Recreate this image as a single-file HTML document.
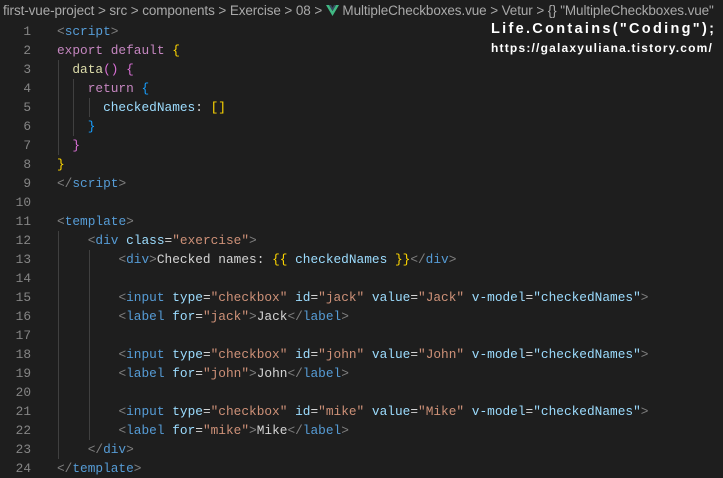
<!DOCTYPE html>
<html><head><meta charset="utf-8"><style>
body{margin:0;width:723px;height:478px;background:#1e1e1e;overflow:hidden;position:relative;font-family:"Liberation Mono",monospace;}
.bc{position:absolute;left:3px;top:1px;height:20px;line-height:20px;font-family:"Liberation Sans",sans-serif;font-size:13.5px;color:#a9a9a9;white-space:nowrap;letter-spacing:-0.1px}
.ln{position:absolute;left:0;width:31px;text-align:right;color:#858585;font-size:12.8px;height:19px;line-height:19px}
.cd{position:absolute;left:57px;font-size:12.8px;height:19px;line-height:19px;white-space:pre;color:#d4d4d4}
.g{position:absolute;width:1px;background:#404040}
.p{color:#808080}.t{color:#569cd6}.a{color:#9cdcfe}.s{color:#ce9178}.k{color:#c586c0}.f{color:#dcdcaa}.y{color:#ffd700}.m{color:#da70d6}.b{color:#179fff}.w{color:#d4d4d4}
.wm{position:absolute;left:491px;font-family:"Liberation Sans",sans-serif;font-weight:bold;color:#fff;white-space:nowrap}
</style></head><body>
<div class="bc">first-vue-project &gt; src &gt; components &gt; Exercise &gt; 08 &gt; <svg width="13" height="11" viewBox="0 0 13 11" style="vertical-align:-1px"><path d="M0 0H3L6.5 6L10 0H13L6.5 11Z" fill="#41b883"/><path d="M3 0H5L6.5 2.6L8 0H10L6.5 6Z" fill="#35495e"/></svg> MultipleCheckboxes.vue &gt; Vetur &gt; {} "MultipleCheckboxes.vue"</div>
<div class="wm" style="top:21px;font-size:14.5px;letter-spacing:2.3px">Life.Contains("Coding");</div>
<div class="wm" style="top:41px;font-size:12px;letter-spacing:1.2px">https://galaxyuliana.tistory.com/</div>

<div class="g" style="left:58px;top:60px;height:95px"></div>
<div class="g" style="left:73px;top:79px;height:57px"></div>
<div class="g" style="left:89px;top:98px;height:19px"></div>
<div class="g" style="left:58px;top:231px;height:228px"></div>
<div class="g" style="left:89px;top:250px;height:190px"></div>

<div class="ln" style="top:22px">1</div><div class="cd" style="top:22px"><span class="p">&lt;</span><span class="t">script</span><span class="p">&gt;</span></div>
<div class="ln" style="top:41px">2</div><div class="cd" style="top:41px"><span class="k">export default</span> <span class="y">{</span></div>
<div class="ln" style="top:60px">3</div><div class="cd" style="top:60px">  <span class="f">data</span><span class="m">()</span> <span class="m">{</span></div>
<div class="ln" style="top:79px">4</div><div class="cd" style="top:79px">    <span class="k">return</span> <span class="b">{</span></div>
<div class="ln" style="top:98px">5</div><div class="cd" style="top:98px">      <span class="a">checkedNames</span>: <span class="y">[]</span></div>
<div class="ln" style="top:117px">6</div><div class="cd" style="top:117px">    <span class="b">}</span></div>
<div class="ln" style="top:136px">7</div><div class="cd" style="top:136px">  <span class="m">}</span></div>
<div class="ln" style="top:155px">8</div><div class="cd" style="top:155px"><span class="y">}</span></div>
<div class="ln" style="top:174px">9</div><div class="cd" style="top:174px"><span class="p">&lt;/</span><span class="t">script</span><span class="p">&gt;</span></div>
<div class="ln" style="top:193px">10</div>
<div class="ln" style="top:212px">11</div><div class="cd" style="top:212px"><span class="p">&lt;</span><span class="t">template</span><span class="p">&gt;</span></div>
<div class="ln" style="top:231px">12</div><div class="cd" style="top:231px">    <span class="p">&lt;</span><span class="t">div</span> <span class="a">class</span>=<span class="s">"exercise"</span><span class="p">&gt;</span></div>
<div class="ln" style="top:250px">13</div><div class="cd" style="top:250px">        <span class="p">&lt;</span><span class="t">div</span><span class="p">&gt;</span>Checked names: <span class="y">{{</span> <span class="a">checkedNames</span> <span class="y">}}</span><span class="p">&lt;/</span><span class="t">div</span><span class="p">&gt;</span></div>
<div class="ln" style="top:269px">14</div>
<div class="ln" style="top:288px">15</div><div class="cd" style="top:288px">        <span class="p">&lt;</span><span class="t">input</span> <span class="a">type</span>=<span class="s">"checkbox"</span> <span class="a">id</span>=<span class="s">"jack"</span> <span class="a">value</span>=<span class="s">"Jack"</span> <span class="a">v-model</span>=<span class="a">"checkedNames"</span><span class="p">&gt;</span></div>
<div class="ln" style="top:307px">16</div><div class="cd" style="top:307px">        <span class="p">&lt;</span><span class="t">label</span> <span class="a">for</span>=<span class="s">"jack"</span><span class="p">&gt;</span>Jack<span class="p">&lt;/</span><span class="t">label</span><span class="p">&gt;</span></div>
<div class="ln" style="top:326px">17</div>
<div class="ln" style="top:345px">18</div><div class="cd" style="top:345px">        <span class="p">&lt;</span><span class="t">input</span> <span class="a">type</span>=<span class="s">"checkbox"</span> <span class="a">id</span>=<span class="s">"john"</span> <span class="a">value</span>=<span class="s">"John"</span> <span class="a">v-model</span>=<span class="a">"checkedNames"</span><span class="p">&gt;</span></div>
<div class="ln" style="top:364px">19</div><div class="cd" style="top:364px">        <span class="p">&lt;</span><span class="t">label</span> <span class="a">for</span>=<span class="s">"john"</span><span class="p">&gt;</span>John<span class="p">&lt;/</span><span class="t">label</span><span class="p">&gt;</span></div>
<div class="ln" style="top:383px">20</div>
<div class="ln" style="top:402px">21</div><div class="cd" style="top:402px">        <span class="p">&lt;</span><span class="t">input</span> <span class="a">type</span>=<span class="s">"checkbox"</span> <span class="a">id</span>=<span class="s">"mike"</span> <span class="a">value</span>=<span class="s">"Mike"</span> <span class="a">v-model</span>=<span class="a">"checkedNames"</span><span class="p">&gt;</span></div>
<div class="ln" style="top:421px">22</div><div class="cd" style="top:421px">        <span class="p">&lt;</span><span class="t">label</span> <span class="a">for</span>=<span class="s">"mike"</span><span class="p">&gt;</span>Mike<span class="p">&lt;/</span><span class="t">label</span><span class="p">&gt;</span></div>
<div class="ln" style="top:440px">23</div><div class="cd" style="top:440px">    <span class="p">&lt;/</span><span class="t">div</span><span class="p">&gt;</span></div>
<div class="ln" style="top:459px">24</div><div class="cd" style="top:459px"><span class="p">&lt;/</span><span class="t">template</span><span class="p">&gt;</span></div>
</body></html>
